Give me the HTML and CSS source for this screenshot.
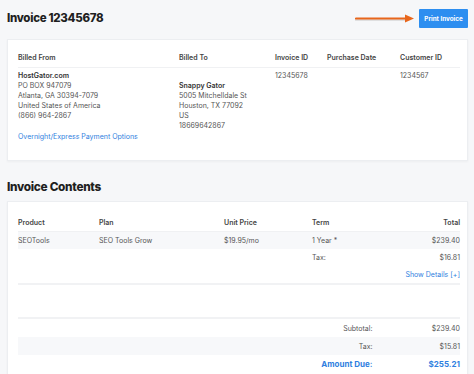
FILE: index.html
```html
<!DOCTYPE html>
<html lang="en">

<head>
    <meta charset="UTF-8">
    <meta name="viewport" content="width=device-width, initial-scale=1.0">
    <title>Invoice 12345678</title>
    <link rel="stylesheet" href="styles.css">
</head>

<body>
    <div class="page">
        <div class="head">
            <h1>Invoice 12345678</h1>
            <div class="actions">
                <svg class="arrow" width="60" height="10" viewBox="0 0 60 10">
                    <line x1="1" y1="5.5" x2="52" y2="5.5" stroke="#c9c9c9" stroke-width="3" stroke-linecap="round" opacity="0.5" />
                    <line x1="1" y1="4.5" x2="52" y2="4.5" stroke="#e8661c" stroke-width="2.2" stroke-linecap="round" />
                    <polygon points="50,0.5 59,4.5 50,8.5" fill="#e8661c" />
                </svg>
                <button class="print">Print Invoice</button>
            </div>
        </div>

        <div class="card info">
            <div class="th">Billed From</div>
            <div class="th">Billed To</div>
            <div class="th">Invoice ID</div>
            <div class="th">Purchase Date</div>
            <div class="th">Customer ID</div>

            <div class="td">
                <b>HostGator.com</b><br>
                PO BOX 947079<br>
                Atlanta, GA 30394-7079<br>
                United States of America<br>
                (866) 964-2867<br>
                <a class="link options" href="#">Overnight/Express Payment Options</a>
            </div>
            <div class="td billed-to">
                <b>Snappy Gator</b><br>
                5005 Mitchelldale St<br>
                Houston, TX 77092<br>
                US<br>
                18669642867
            </div>
            <div class="td">12345678</div>
            <div class="td"></div>
            <div class="td">1234567</div>
        </div>

        <h2>Invoice Contents</h2>

        <div class="card contents">
            <table class="items">
                <thead>
                    <tr>
                        <th class="c-product">Product</th>
                        <th class="c-plan">Plan</th>
                        <th class="c-price">Unit Price</th>
                        <th class="c-term">Term</th>
                        <th class="num">Total</th>
                    </tr>
                </thead>
                <tbody>
                    <tr class="shade">
                        <td>SEOTools</td>
                        <td>SEO Tools Grow</td>
                        <td>$19.95/mo</td>
                        <td>1 Year *</td>
                        <td class="num">$239.40</td>
                    </tr>
                    <tr>
                        <td></td>
                        <td></td>
                        <td></td>
                        <td>Tax:</td>
                        <td class="num">$16.81</td>
                    </tr>
                    <tr>
                        <td colspan="5" class="num"><a class="link" href="#">Show Details [+]</a></td>
                    </tr>
                </tbody>
            </table>

            <div class="spacer"></div>

            <table class="summary">
                <tr>
                    <td class="label">Subtotal:</td>
                    <td class="num">$239.40</td>
                </tr>
                <tr class="shade">
                    <td class="label">Tax:</td>
                    <td class="num">$15.81</td>
                </tr>
                <tr class="due">
                    <td class="label">Amount Due:</td>
                    <td class="num">$255.21</td>
                </tr>
            </table>
        </div>
    </div>
</body>

</html>
```

FILE: styles.css
```css
body {
    margin: 0;
    background: #f6f7f9;
    font-family: Inter, "Open Sans", sans-serif;
    font-size: 7px;
    color: #555;
}

.page {
    padding: 0 6px 0 7px;
}

.head {
    height: 39px;
    display: flex;
    justify-content: space-between;
    align-items: center;
}

h1,
h2 {
    margin: 0;
    font-weight: 800;
    color: #1f1f1f;
    letter-spacing: -0.3px;
}

h1 {
    font-size: 11.5px;
    margin-top: -4px;
}

h2 {
    font-size: 11.8px;
    height: 40px;
    line-height: 28px;
    padding-top: 12px;
    box-sizing: border-box;
}

.actions {
    display: flex;
    align-items: center;
    gap: 4px;
    margin-top: -2px;
}

.print {
    width: 49px;
    height: 19px;
    padding: 0;
    border: none;
    border-radius: 1px;
    background: #2d8ef0;
    color: #fff;
    font-family: Inter, sans-serif;
    font-size: 6.3px;
    font-weight: 700;
}

.card {
    background: #fff;
    border: 1px solid #eceef1;
    box-shadow: 0 1px 2px rgba(0, 0, 0, 0.04);
}

.link {
    color: #2f7fe0;
    text-decoration: none;
}

.info {
    display: grid;
    grid-template-columns: 161px 96px 52px 73px 1fr;
    padding: 11px 7px 18px 10px;
    line-height: 10px;
}

.th {
    font-weight: 600;
    color: #444;
    padding: 2px 0 4px;
    border-bottom: 1px solid #f0f1f3;
}

.td {
    padding-top: 3px;
}

.td b {
    font-weight: 600;
    color: #333;
}

.billed-to {
    padding-top: 13px;
}

.options {
    display: inline-block;
    margin-top: 11px;
}

.contents {
    padding: 11px 7px 0 10px;
    height: 180px;
}

table {
    width: 100%;
    border-collapse: collapse;
}

th,
td {
    padding: 0;
    text-align: left;
    font-weight: 400;
}

.items th {
    font-weight: 600;
    color: #444;
    height: 18px;
    border-bottom: 1px solid #f0f1f3;
}

.items td {
    height: 17px;
}

.c-product {
    width: 81px;
}

.c-plan {
    width: 125px;
}

.c-price {
    width: 88px;
}

.num {
    text-align: right;
}

.shade td {
    background: #f7f8fa;
}

.spacer {
    height: 32px;
    border-top: 2px solid #f1f2f4;
    border-bottom: 2px solid #f1f2f4;
}

.summary td {
    height: 18px;
}

.summary .label {
    text-align: right;
    padding-right: 56px;
}

.summary .num {
    width: 1px;
    white-space: nowrap;
}

.due td {
    color: #2f7fe0;
    font-weight: 700;
    font-size: 8px;
}
```
